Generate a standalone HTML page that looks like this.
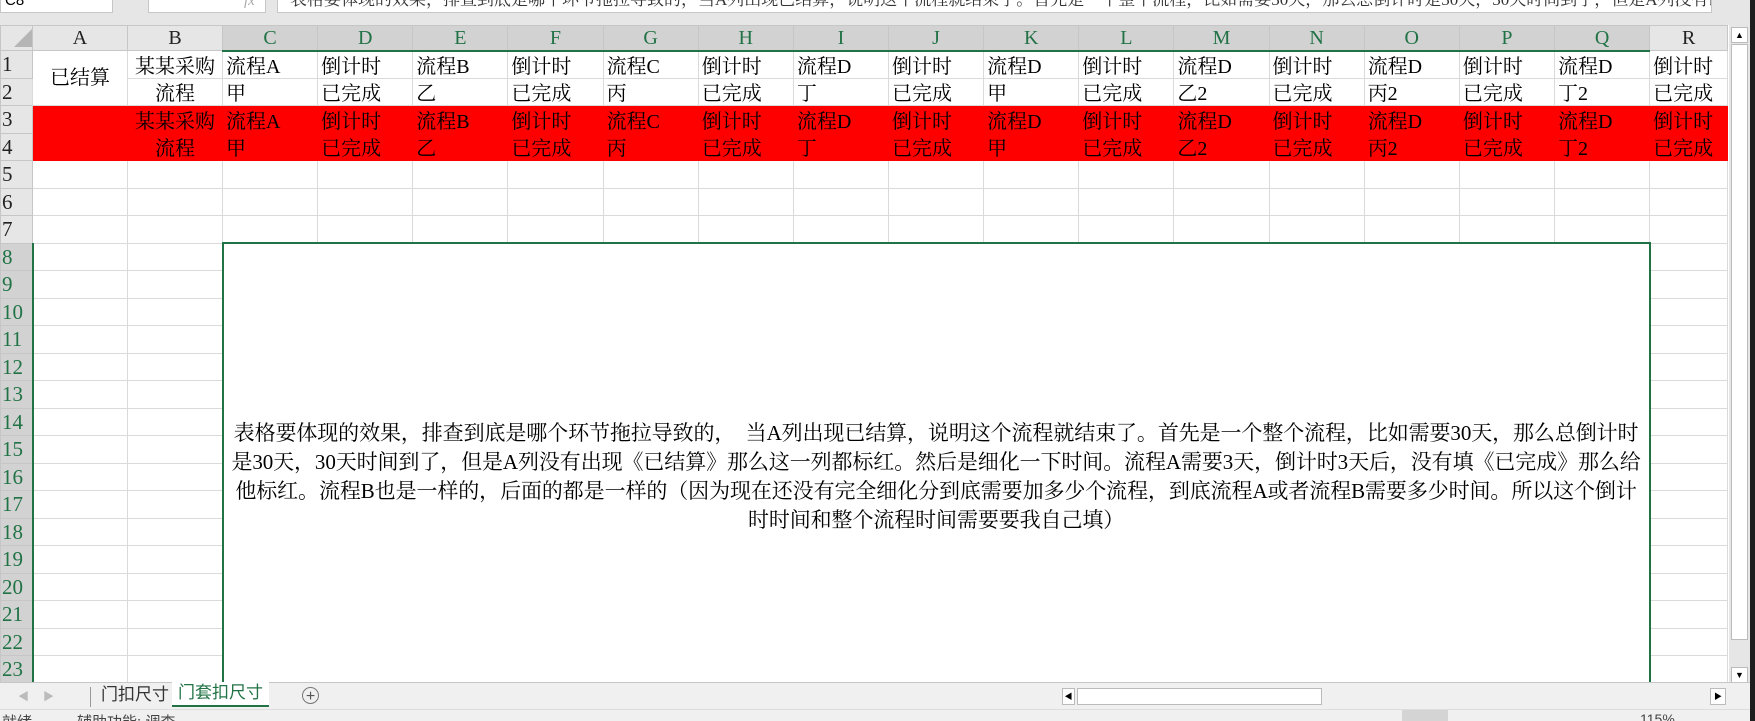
<!DOCTYPE html>
<html><head><meta charset="utf-8"><style>
*{margin:0;padding:0;box-sizing:border-box}
body{width:1755px;height:721px;overflow:hidden;background:#fff;position:relative;font-family:"Liberation Serif","Noto Serif CJK SC",serif;}
.abs{position:absolute}
table{position:absolute;left:0;top:25px;border-collapse:collapse;table-layout:fixed;width:1727px}
td{border:1px solid #dadada;height:27.5px;font-size:20px;line-height:22px;padding:0 3px;white-space:nowrap;overflow:hidden;vertical-align:bottom;color:#000}
tr.hd td{height:25px;background:#e6e6e6;border-color:#c6c6c6;text-align:center;font-size:20px;color:#222;vertical-align:middle}
tr.hd td.s{background:#d2d2d2;color:#217346;border-bottom:2px solid #217346}
td.rh{background:#e6e6e6;border-color:#c6c6c6;text-align:left;padding-left:1px;font-size:21px;color:#222;vertical-align:middle}
td.rs{background:#d2d2d2;color:#217346;border-right:2px solid #217346}
tr.red td.c{background:#f00;border-color:#f00}
.ctr{text-align:center}
.big{border:2px solid #217346;text-align:center;vertical-align:middle;font-size:21px;line-height:28.8px;padding-top:28px;letter-spacing:-0.1px}
</style></head><body>
<div class="abs" style="left:0;top:0;width:1755px;height:25px;background:#e6e6e6"></div>
<div class="abs" style="left:0;top:-8px;width:113px;height:21px;background:#fff;border:1px solid #c6c6c6;font:15px 'Liberation Sans',sans-serif;padding-left:4px;line-height:16px">C8</div>
<div class="abs" style="left:148px;top:-8px;width:118px;height:21px;background:#fff;border:1px solid #c6c6c6;color:#aaa;font:15px 'Liberation Serif';line-height:16px;padding-left:95px"><i>fx</i></div>
<div class="abs" style="left:277px;top:-8px;width:1435px;height:21px;background:#fff;border:1px solid #c6c6c6;font:17px 'Liberation Serif','Noto Serif CJK SC',serif;line-height:14px;padding-left:12px;white-space:nowrap;overflow:hidden;color:#333">表格要体现的效果，排查到底是哪个环节拖拉导致的，当A列出现已结算，说明这个流程就结束了。首先是一个整个流程，比如需要30天，那么总倒计时是30天，30天时间到了，但是A列没有出现《</div>
<div class="abs" style="left:1729px;top:25px;width:26px;height:696px;background:#e6e6e6"></div>
<div class="abs" style="left:1750px;top:0;width:5px;height:721px;background:#1e1e1e"></div>
<table>
<colgroup><col style="width:32px"><col style="width:95px"><col style="width:95px">
<col style="width:95.15px"><col style="width:95.15px"><col style="width:95.15px"><col style="width:95.15px"><col style="width:95.15px"><col style="width:95.15px"><col style="width:95.15px"><col style="width:95.15px"><col style="width:95.15px"><col style="width:95.15px"><col style="width:95.15px"><col style="width:95.15px"><col style="width:95.15px"><col style="width:95.15px"><col style="width:95.15px"><col style="width:78px"></colgroup>
<tr class="hd"><td style="background:#e6e6e6"><div style="width:0;height:0;border-left:18px solid transparent;border-bottom:18px solid #b5b5b5;margin-left:10px"></div></td><td>A</td><td>B</td><td class="s">C</td><td class="s">D</td><td class="s">E</td><td class="s">F</td><td class="s">G</td><td class="s">H</td><td class="s">I</td><td class="s">J</td><td class="s">K</td><td class="s">L</td><td class="s">M</td><td class="s">N</td><td class="s">O</td><td class="s">P</td><td class="s">Q</td><td>R</td></tr>
<tr><td class="rh">1</td><td rowspan="2" class="ctr" style="vertical-align:middle">已结算</td><td class="ctr">某某采购</td><td>流程A</td><td>倒计时</td><td>流程B</td><td>倒计时</td><td>流程C</td><td>倒计时</td><td>流程D</td><td>倒计时</td><td>流程D</td><td>倒计时</td><td>流程D</td><td>倒计时</td><td>流程D</td><td>倒计时</td><td>流程D</td><td>倒计时</td></tr>
<tr><td class="rh">2</td><td class="ctr">流程</td><td>甲</td><td>已完成</td><td>乙</td><td>已完成</td><td>丙</td><td>已完成</td><td>丁</td><td>已完成</td><td>甲</td><td>已完成</td><td>乙2</td><td>已完成</td><td>丙2</td><td>已完成</td><td>丁2</td><td>已完成</td></tr>
<tr class="red"><td class="rh">3</td><td class="c"></td><td class="c ctr">某某采购</td><td class="c">流程A</td><td class="c">倒计时</td><td class="c">流程B</td><td class="c">倒计时</td><td class="c">流程C</td><td class="c">倒计时</td><td class="c">流程D</td><td class="c">倒计时</td><td class="c">流程D</td><td class="c">倒计时</td><td class="c">流程D</td><td class="c">倒计时</td><td class="c">流程D</td><td class="c">倒计时</td><td class="c">流程D</td><td class="c">倒计时</td></tr>
<tr class="red"><td class="rh">4</td><td class="c"></td><td class="c ctr">流程</td><td class="c">甲</td><td class="c">已完成</td><td class="c">乙</td><td class="c">已完成</td><td class="c">丙</td><td class="c">已完成</td><td class="c">丁</td><td class="c">已完成</td><td class="c">甲</td><td class="c">已完成</td><td class="c">乙2</td><td class="c">已完成</td><td class="c">丙2</td><td class="c">已完成</td><td class="c">丁2</td><td class="c">已完成</td></tr>
<tr><td class="rh">5</td><td></td><td></td><td></td><td></td><td></td><td></td><td></td><td></td><td></td><td></td><td></td><td></td><td></td><td></td><td></td><td></td><td></td><td></td></tr>
<tr><td class="rh">6</td><td></td><td></td><td></td><td></td><td></td><td></td><td></td><td></td><td></td><td></td><td></td><td></td><td></td><td></td><td></td><td></td><td></td><td></td></tr>
<tr><td class="rh">7</td><td></td><td></td><td></td><td></td><td></td><td></td><td></td><td></td><td></td><td></td><td></td><td></td><td></td><td></td><td></td><td></td><td></td><td></td></tr>
<tr><td class="rh rs">8</td><td></td><td></td><td colspan="15" rowspan="16" class="big">表格要体现的效果，排查到底是哪个环节拖拉导致的，　当A列出现已结算，说明这个流程就结束了。首先是一个整个流程，比如需要30天，那么总倒计时<br>是30天，30天时间到了，但是A列没有出现《已结算》那么这一列都标红。然后是细化一下时间。流程A需要3天，倒计时3天后，没有填《已完成》那么给<br>他标红。流程B也是一样的，后面的都是一样的（因为现在还没有完全细化分到底需要加多少个流程，到底流程A或者流程B需要多少时间。所以这个倒计<br>时时间和整个流程时间需要要我自己填）</td><td></td></tr>
<tr><td class="rh rs">9</td><td></td><td></td><td></td></tr>
<tr><td class="rh rs">10</td><td></td><td></td><td></td></tr>
<tr><td class="rh rs">11</td><td></td><td></td><td></td></tr>
<tr><td class="rh rs">12</td><td></td><td></td><td></td></tr>
<tr><td class="rh rs">13</td><td></td><td></td><td></td></tr>
<tr><td class="rh rs">14</td><td></td><td></td><td></td></tr>
<tr><td class="rh rs">15</td><td></td><td></td><td></td></tr>
<tr><td class="rh rs">16</td><td></td><td></td><td></td></tr>
<tr><td class="rh rs">17</td><td></td><td></td><td></td></tr>
<tr><td class="rh rs">18</td><td></td><td></td><td></td></tr>
<tr><td class="rh rs">19</td><td></td><td></td><td></td></tr>
<tr><td class="rh rs">20</td><td></td><td></td><td></td></tr>
<tr><td class="rh rs">21</td><td></td><td></td><td></td></tr>
<tr><td class="rh rs">22</td><td></td><td></td><td></td></tr>
<tr><td class="rh rs">23</td><td></td><td></td><td></td></tr>
</table>
<div class="abs" style="left:1731px;top:27px;width:17px;height:16px;background:#fff;border:1px solid #bbb;font-size:9px;text-align:center;line-height:14px">▲</div>
<div class="abs" style="left:1731px;top:44px;width:17px;height:596px;background:#fff;border:1px solid #bbb"></div>
<div class="abs" style="left:1731px;top:667px;width:17px;height:16px;background:#fff;border:1px solid #bbb;font-size:9px;text-align:center;line-height:14px">▼</div>
<div class="abs" style="left:0;top:682px;width:1750px;height:27px;background:#f0f0f0;border-top:1px solid #c6c6c6"></div>
<div class="abs" style="left:18px;top:688px;color:#bbb;font-size:11px">◀</div>
<div class="abs" style="left:43px;top:688px;color:#bbb;font-size:11px">▶</div>
<div class="abs" style="left:90px;top:687px;width:1px;height:20px;background:#999"></div>
<div class="abs" style="left:101px;top:685px;font:17px 'Liberation Sans','Noto Sans CJK SC',sans-serif;color:#333;line-height:20px;white-space:nowrap">门扣尺寸</div>
<div class="abs" style="left:172px;top:682px;width:97px;height:25px;background:#fff;border-bottom:2px solid #217346;font:17px 'Liberation Sans','Noto Sans CJK SC',sans-serif;color:#217346;text-align:center;line-height:22px;white-space:nowrap">门套扣尺寸</div>
<div class="abs" style="left:302px;top:687px;width:17px;height:17px;border:1px solid #777;border-radius:50%;text-align:center;line-height:14px;font:16px 'Liberation Sans';color:#555">+</div>
<div class="abs" style="left:1061px;top:688px;width:668px;height:17px;background:#f0f0f0"></div>
<div class="abs" style="left:1062px;top:688px;width:13px;height:17px;background:#fff;border:1px solid #bbb;font-size:8px;line-height:15px;text-align:center">◀</div>
<div class="abs" style="left:1077px;top:688px;width:245px;height:17px;background:#fff;border:1px solid #bbb"></div>
<div class="abs" style="left:1710px;top:688px;width:16px;height:17px;background:#fff;border:1px solid #bbb;font-size:8px;line-height:15px;text-align:center">▶</div>
<div class="abs" style="left:0;top:709px;width:1750px;height:12px;background:#f0f0f0;border-top:1px solid #ddd;overflow:hidden">
<div class="abs" style="left:2px;top:1px;font:15px 'Liberation Sans','Noto Sans CJK SC',sans-serif;color:#444">就绪　　　辅助功能: 调查</div>
<div class="abs" style="left:1402px;top:0;width:46px;height:12px;background:#d4d4d4"></div>
<div class="abs" style="left:1640px;top:1px;font:14px 'Liberation Sans';color:#444">115%</div>
</div>
</body></html>
